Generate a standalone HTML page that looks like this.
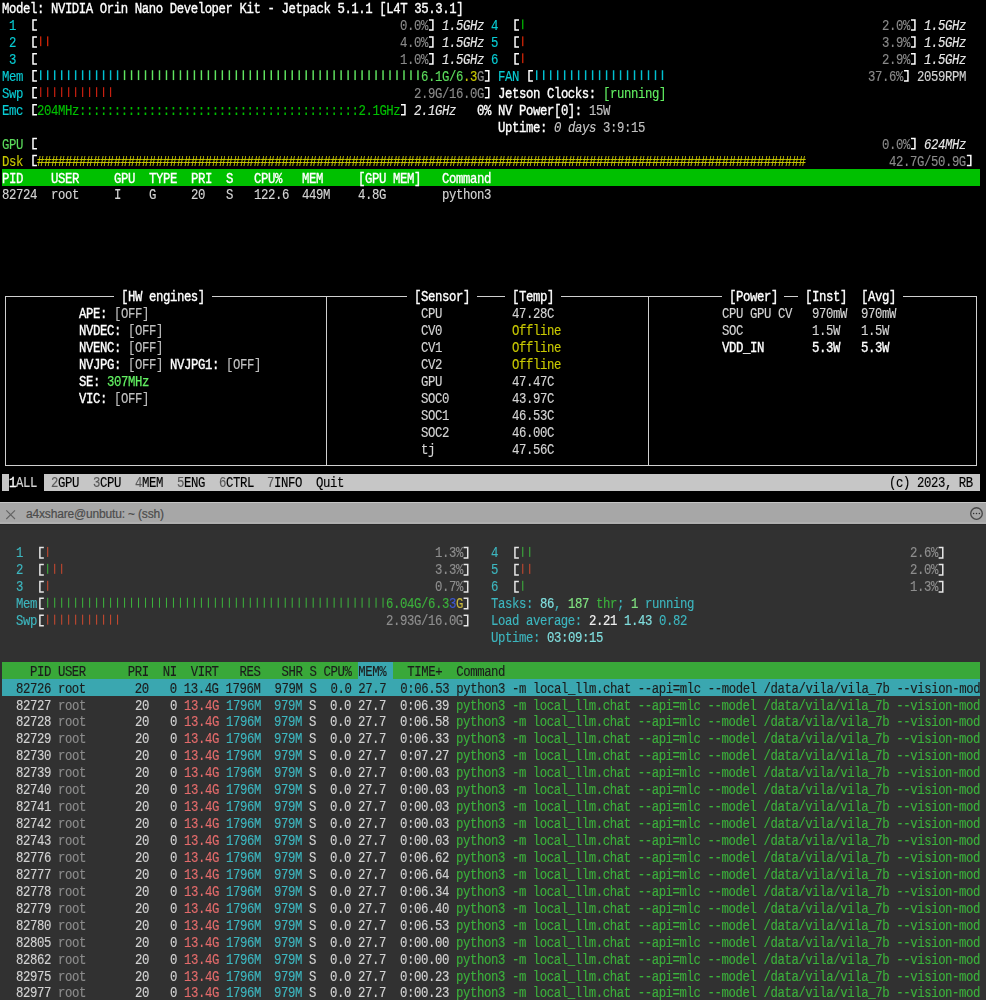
<!DOCTYPE html>
<html><head><meta charset="utf-8"><style>
html,body{margin:0;padding:0;background:#000;}
body{width:986px;height:1000px;position:relative;overflow:hidden;font-family:"Liberation Mono",monospace;}
.t{position:absolute;white-space:pre;font-size:14.5px;line-height:17.0px;letter-spacing:-0.481px;transform:scaleX(0.85);transform-origin:0 0;-webkit-text-stroke:0.15px currentColor;}
.r{position:absolute;}
#top{position:absolute;left:0;top:0;width:986px;height:502px;background:#000;}
#bot{position:absolute;left:0;top:524px;width:986px;height:476px;background:#313131;}
#bot .inner{position:absolute;left:0;top:-524px;width:986px;height:1000px;will-change:transform;}
.inner2{position:absolute;left:0;top:0;width:986px;height:502px;will-change:transform;}
#title{position:absolute;left:0;top:502px;width:986px;height:22px;background:#a7a7a7;border-top:1px solid #c6c6c6;border-bottom:2px solid #afafaf;box-sizing:border-box;}
#tline{position:absolute;left:0;top:524px;width:986px;height:1px;background:#292929;}
.w{color:#ffffff;-webkit-text-stroke:0.35px #ffffff;}
.br{color:#ffffff;-webkit-text-stroke:0.6px #ffffff;}
.hbr{color:#e8e8e8;-webkit-text-stroke:0.5px #e8e8e8;}
.lt{color:#d4d4d4;}
.gr{color:#8a8a8a;}
.gr2{color:#c0c0c0;}
.it2{color:#c8c8c8;font-style:italic;}
.cy{color:#08ccd4;}
.it{color:#e6e6e6;font-style:italic;}
.lg{color:#5cdc5c;}
.lgr{color:#62f062;}
.lgb{color:#62f062;-webkit-text-stroke:0.25px #62f062;}
.g{color:#00c000;}
.y{color:#c8c800;}
.bk{color:#000;}
.dg{color:#585858;}
.hcy{color:#3db6bf;}
.hw{color:#e8e8e8;-webkit-text-stroke:0.2px #e8e8e8;}
.hwb{color:#f0f0f0;-webkit-text-stroke:0.2px #f0f0f0;}
.hgr{color:#8e8e8e;}
.hlt{color:#d2d2d2;}
.hroot{color:#8c8c8c;}
.hred{color:#e36b6b;}
.hgreen{color:#3cb03c;}
.hlcy{color:#80dede;-webkit-text-stroke:0.2px #80dede;}
.hlg{color:#80e080;-webkit-text-stroke:0.2px #80e080;}
.hbl{color:#3c58d0;}
.hyl{color:#c8b83c;}
.hdark{color:#1c1c1c;}
#ttl{position:absolute;left:26px;top:3px;font-family:"Liberation Sans",sans-serif;font-size:12px;letter-spacing:-0.17px;line-height:16px;color:#4c4c4c;-webkit-text-stroke:0.2px #4c4c4c;white-space:pre;}
</style></head>
<body>
<div id="top"><div class="inner2">
<span class="t w" style="left:2.00px;top:1.14px">Model: NVIDIA Orin Nano Developer Kit - Jetpack 5.1.1 [L4T 35.3.1]</span>
<span class="t cy" style="left:8.99px;top:18.08px">1</span>
<span class="t gr" style="left:400.20px;top:18.08px">0.0%</span>
<span class="t it" style="left:442.12px;top:18.08px">1.5GHz</span>
<span class="t cy" style="left:491.02px;top:18.08px">4</span>
<span class="t gr" style="left:882.24px;top:18.08px">2.0%</span>
<span class="t it" style="left:924.15px;top:18.08px">1.5GHz</span>
<span class="t cy" style="left:8.99px;top:35.02px">2</span>
<span class="t gr" style="left:400.20px;top:35.02px">4.0%</span>
<span class="t it" style="left:442.12px;top:35.02px">1.5GHz</span>
<span class="t cy" style="left:491.02px;top:35.02px">5</span>
<span class="t gr" style="left:882.24px;top:35.02px">3.9%</span>
<span class="t it" style="left:924.15px;top:35.02px">1.5GHz</span>
<span class="t cy" style="left:8.99px;top:51.96px">3</span>
<span class="t gr" style="left:400.20px;top:51.96px">1.0%</span>
<span class="t it" style="left:442.12px;top:51.96px">1.5GHz</span>
<span class="t cy" style="left:491.02px;top:51.96px">6</span>
<span class="t gr" style="left:882.24px;top:51.96px">2.9%</span>
<span class="t it" style="left:924.15px;top:51.96px">1.5GHz</span>
<span class="t cy" style="left:2.00px;top:68.90px">Mem</span>
<span class="t lg" style="left:421.16px;top:68.90px">6.1G/6</span>
<span class="t y" style="left:463.08px;top:68.90px">.3</span>
<span class="t gr" style="left:477.05px;top:68.90px">G</span>
<span class="t cy" style="left:498.01px;top:68.90px">FAN</span>
<span class="t gr" style="left:868.26px;top:68.90px">37.6%</span>
<span class="t lt" style="left:917.17px;top:68.90px">2059RPM</span>
<span class="t cy" style="left:2.00px;top:85.84px">Swp</span>
<span class="t gr" style="left:414.17px;top:85.84px">2.9G/16.0G</span>
<span class="t w" style="left:498.01px;top:85.84px">Jetson Clocks:</span>
<span class="t lgr" style="left:602.80px;top:85.84px">[running]</span>
<span class="t cy" style="left:2.00px;top:102.78px">Emc</span>
<span class="t g" style="left:36.93px;top:102.78px">204MHz::::::::::::::::::::::::::::::::::::::::2.1GHz</span>
<span class="t it" style="left:414.17px;top:102.78px">2.1GHz</span>
<span class="t w" style="left:477.05px;top:102.78px">0%</span>
<span class="t w" style="left:498.01px;top:102.78px">NV Power[0]:</span>
<span class="t gr2" style="left:588.82px;top:102.78px">15W</span>
<span class="t w" style="left:498.01px;top:119.72px">Uptime:</span>
<span class="t it2" style="left:553.89px;top:119.72px">0 days</span>
<span class="t gr2" style="left:602.80px;top:119.72px">3:9:15</span>
<span class="t lg" style="left:2.00px;top:136.66px">GPU</span>
<span class="t gr" style="left:882.24px;top:136.66px">0.0%</span>
<span class="t it" style="left:924.15px;top:136.66px">624MHz</span>
<span class="t y" style="left:2.00px;top:153.60px">Dsk</span>
<span class="t y" style="left:36.93px;top:153.60px">##############################################################################################################</span>
<span class="t gr" style="left:889.22px;top:153.60px">42.7G/50.9G</span>
<div class="r" style="left:2.00px;top:169.00px;width:978.04px;height:16.94px;background:#00c000"></div>
<span class="t w" style="left:2.00px;top:170.54px">PID</span>
<span class="t w" style="left:50.90px;top:170.54px">USER</span>
<span class="t w" style="left:113.78px;top:170.54px">GPU</span>
<span class="t w" style="left:148.71px;top:170.54px">TYPE</span>
<span class="t w" style="left:190.62px;top:170.54px">PRI</span>
<span class="t w" style="left:225.55px;top:170.54px">S</span>
<span class="t w" style="left:253.50px;top:170.54px">CPU%</span>
<span class="t w" style="left:302.40px;top:170.54px">MEM</span>
<span class="t w" style="left:358.29px;top:170.54px">[GPU MEM]</span>
<span class="t w" style="left:442.12px;top:170.54px">Command</span>
<span class="t lt" style="left:2.00px;top:187.48px">82724</span>
<span class="t lt" style="left:50.90px;top:187.48px">root</span>
<span class="t lt" style="left:113.78px;top:187.48px">I</span>
<span class="t lt" style="left:148.71px;top:187.48px">G</span>
<span class="t lt" style="left:190.62px;top:187.48px">20</span>
<span class="t lt" style="left:225.55px;top:187.48px">S</span>
<span class="t lt" style="left:253.50px;top:187.48px">122.6</span>
<span class="t lt" style="left:302.40px;top:187.48px">449M</span>
<span class="t lt" style="left:358.29px;top:187.48px">4.8G</span>
<span class="t lt" style="left:442.12px;top:187.48px">python3</span>
<div class="r" style="left:5.49px;top:295.55px;width:108.28px;height:1.00px;background:#d0d0d0"></div>
<div class="r" style="left:211.58px;top:295.55px;width:195.61px;height:1.00px;background:#d0d0d0"></div>
<div class="r" style="left:477.05px;top:295.55px;width:27.94px;height:1.00px;background:#d0d0d0"></div>
<div class="r" style="left:560.88px;top:295.55px;width:160.68px;height:1.00px;background:#d0d0d0"></div>
<div class="r" style="left:784.43px;top:295.55px;width:13.97px;height:1.00px;background:#d0d0d0"></div>
<div class="r" style="left:903.19px;top:295.55px;width:73.85px;height:1.00px;background:#d0d0d0"></div>
<div class="r" style="left:5.49px;top:464.95px;width:971.55px;height:1.00px;background:#d0d0d0"></div>
<div class="r" style="left:4.99px;top:296.05px;width:1.00px;height:169.40px;background:#d0d0d0"></div>
<div class="r" style="left:326.35px;top:296.05px;width:1.00px;height:169.40px;background:#d0d0d0"></div>
<div class="r" style="left:647.71px;top:296.05px;width:1.00px;height:169.40px;background:#d0d0d0"></div>
<div class="r" style="left:976.05px;top:296.05px;width:1.00px;height:169.40px;background:#d0d0d0"></div>
<span class="t w" style="left:120.76px;top:289.12px">[HW engines]</span>
<span class="t w" style="left:414.17px;top:289.12px">[Sensor]</span>
<span class="t w" style="left:511.98px;top:289.12px">[Temp]</span>
<span class="t w" style="left:728.54px;top:289.12px">[Power]</span>
<span class="t w" style="left:805.39px;top:289.12px">[Inst]</span>
<span class="t w" style="left:861.28px;top:289.12px">[Avg]</span>
<span class="t w" style="left:78.85px;top:306.06px">APE:</span>
<span class="t gr2" style="left:113.78px;top:306.06px">[OFF]</span>
<span class="t w" style="left:78.85px;top:323.00px">NVDEC:</span>
<span class="t gr2" style="left:127.75px;top:323.00px">[OFF]</span>
<span class="t w" style="left:78.85px;top:339.94px">NVENC:</span>
<span class="t gr2" style="left:127.75px;top:339.94px">[OFF]</span>
<span class="t w" style="left:78.85px;top:356.88px">NVJPG:</span>
<span class="t gr2" style="left:127.75px;top:356.88px">[OFF]</span>
<span class="t w" style="left:169.66px;top:356.88px">NVJPG1:</span>
<span class="t gr2" style="left:225.55px;top:356.88px">[OFF]</span>
<span class="t w" style="left:78.85px;top:373.82px">SE:</span>
<span class="t lgb" style="left:106.79px;top:373.82px">307MHz</span>
<span class="t w" style="left:78.85px;top:390.76px">VIC:</span>
<span class="t gr2" style="left:113.78px;top:390.76px">[OFF]</span>
<span class="t lt" style="left:421.16px;top:306.06px">CPU</span>
<span class="t lt" style="left:511.98px;top:306.06px">47.28C</span>
<span class="t lt" style="left:421.16px;top:323.00px">CV0</span>
<span class="t y" style="left:511.98px;top:323.00px">Offline</span>
<span class="t lt" style="left:421.16px;top:339.94px">CV1</span>
<span class="t y" style="left:511.98px;top:339.94px">Offline</span>
<span class="t lt" style="left:421.16px;top:356.88px">CV2</span>
<span class="t y" style="left:511.98px;top:356.88px">Offline</span>
<span class="t lt" style="left:421.16px;top:373.82px">GPU</span>
<span class="t lt" style="left:511.98px;top:373.82px">47.47C</span>
<span class="t lt" style="left:421.16px;top:390.76px">SOC0</span>
<span class="t lt" style="left:511.98px;top:390.76px">43.97C</span>
<span class="t lt" style="left:421.16px;top:407.70px">SOC1</span>
<span class="t lt" style="left:511.98px;top:407.70px">46.53C</span>
<span class="t lt" style="left:421.16px;top:424.64px">SOC2</span>
<span class="t lt" style="left:511.98px;top:424.64px">46.00C</span>
<span class="t lt" style="left:421.16px;top:441.58px">tj</span>
<span class="t lt" style="left:511.98px;top:441.58px">47.56C</span>
<span class="t lt" style="left:721.56px;top:306.06px">CPU GPU CV</span>
<span class="t lt" style="left:812.38px;top:306.06px">970mW</span>
<span class="t lt" style="left:861.28px;top:306.06px">970mW</span>
<span class="t lt" style="left:721.56px;top:323.00px">SOC</span>
<span class="t lt" style="left:812.38px;top:323.00px">1.5W</span>
<span class="t lt" style="left:861.28px;top:323.00px">1.5W</span>
<span class="t w" style="left:721.56px;top:339.94px">VDD_IN</span>
<span class="t w" style="left:812.38px;top:339.94px">5.3W</span>
<span class="t w" style="left:861.28px;top:339.94px">5.3W</span>
<div class="r" style="left:2.00px;top:473.92px;width:6.99px;height:16.94px;background:#c6c6c6"></div>
<div class="r" style="left:43.92px;top:473.92px;width:936.12px;height:16.94px;background:#c6c6c6"></div>
<span class="t w" style="left:8.99px;top:475.46px">1</span>
<span class="t lt" style="left:15.97px;top:475.46px">ALL</span>
<span class="t dg" style="left:50.90px;top:475.46px">2</span>
<span class="t bk" style="left:57.89px;top:475.46px">GPU</span>
<span class="t dg" style="left:92.82px;top:475.46px">3</span>
<span class="t bk" style="left:99.80px;top:475.46px">CPU</span>
<span class="t dg" style="left:134.73px;top:475.46px">4</span>
<span class="t bk" style="left:141.72px;top:475.46px">MEM</span>
<span class="t dg" style="left:176.65px;top:475.46px">5</span>
<span class="t bk" style="left:183.64px;top:475.46px">ENG</span>
<span class="t dg" style="left:218.57px;top:475.46px">6</span>
<span class="t bk" style="left:225.55px;top:475.46px">CTRL</span>
<span class="t dg" style="left:267.47px;top:475.46px">7</span>
<span class="t bk" style="left:274.45px;top:475.46px">INFO</span>
<span class="t bk" style="left:316.37px;top:475.46px">Quit</span>
<span class="t bk" style="left:889.22px;top:475.46px">(c) 2023, RB</span>
</div></div>
<div id="title">
<svg style="position:absolute;left:5px;top:6px" width="12" height="12" viewBox="0 0 12 12"><path d="M1.3 1.3L10 10M10 1.3L1.3 10" stroke="#636363" stroke-width="1.1" fill="none"/></svg>
<span id="ttl">a4xshare@unbutu: ~ (ssh)</span>
<svg style="position:absolute;left:969px;top:3px" width="15" height="15" viewBox="0 0 15 15"><circle cx="7.5" cy="7.5" r="5.8" stroke="#484848" stroke-width="1.35" fill="none"/><circle cx="4.6" cy="7.5" r="0.75" fill="#303030"/><circle cx="7.5" cy="7.5" r="0.75" fill="#303030"/><circle cx="10.4" cy="7.5" r="0.75" fill="#303030"/></svg>
</div>
<div id="bot"><div class="inner">
<span class="t hcy" style="left:15.97px;top:545.04px">1</span>
<span class="t hcy" style="left:15.97px;top:561.98px">2</span>
<span class="t hcy" style="left:15.97px;top:578.92px">3</span>
<span class="t hgr" style="left:435.13px;top:545.04px">1.3%</span>
<span class="t hgr" style="left:435.13px;top:561.98px">3.3%</span>
<span class="t hgr" style="left:435.13px;top:578.92px">0.7%</span>
<span class="t hcy" style="left:491.02px;top:545.04px">4</span>
<span class="t hgr" style="left:910.18px;top:545.04px">2.6%</span>
<span class="t hcy" style="left:491.02px;top:561.98px">5</span>
<span class="t hgr" style="left:910.18px;top:561.98px">2.0%</span>
<span class="t hcy" style="left:491.02px;top:578.92px">6</span>
<span class="t hgr" style="left:910.18px;top:578.92px">1.3%</span>
<span class="t hcy" style="left:15.97px;top:595.86px">Mem</span>
<span class="t hgreen" style="left:386.23px;top:595.86px">6.04G/6.3</span>
<span class="t hbl" style="left:449.10px;top:595.86px">3</span>
<span class="t hyl" style="left:456.09px;top:595.86px">G</span>
<span class="t hcy" style="left:15.97px;top:612.80px">Swp</span>
<span class="t hgr" style="left:386.23px;top:612.80px">2.93G/16.0G</span>
<span class="t hcy" style="left:491.02px;top:595.86px">Tasks:</span>
<span class="t hlcy" style="left:539.92px;top:595.86px">86</span>
<span class="t hcy" style="left:553.89px;top:595.86px">,</span>
<span class="t hlg" style="left:567.87px;top:595.86px">187</span>
<span class="t hgreen" style="left:595.81px;top:595.86px">thr</span>
<span class="t hcy" style="left:616.77px;top:595.86px">;</span>
<span class="t hlg" style="left:630.74px;top:595.86px">1</span>
<span class="t hcy" style="left:644.71px;top:595.86px">running</span>
<span class="t hcy" style="left:491.02px;top:612.80px">Load average:</span>
<span class="t hwb" style="left:588.82px;top:612.80px">2.21</span>
<span class="t hlcy" style="left:623.75px;top:612.80px">1.43</span>
<span class="t hcy" style="left:658.68px;top:612.80px">0.82</span>
<span class="t hcy" style="left:491.02px;top:629.74px">Uptime:</span>
<span class="t hlcy" style="left:546.91px;top:629.74px">03:09:15</span>
<div class="r" style="left:2.00px;top:662.08px;width:978.04px;height:16.94px;background:#39a839"></div>
<div class="r" style="left:358.29px;top:662.08px;width:34.93px;height:16.94px;background:#3aa7b0"></div>
<span class="t hdark" style="left:2.00px;top:663.62px">    PID USER      PRI  NI  VIRT   RES   SHR S CPU% MEM%   TIME+  Command</span>
<div class="r" style="left:2.00px;top:679.02px;width:978.04px;height:16.94px;background:#3aa7b0"></div>
<span class="t hdark" style="left:2.00px;top:680.56px">  82726 root       20   0 13.4G 1796M  979M S  0.0 27.7  0:06.53 python3 -m local_llm.chat --api=mlc --model /data/vila/vila_7b --vision-mod</span>
<span class="t hlt" style="left:15.97px;top:697.50px">82727</span>
<span class="t hroot" style="left:57.89px;top:697.50px">root</span>
<span class="t hlt" style="left:134.73px;top:697.50px">20</span>
<span class="t hlt" style="left:169.66px;top:697.50px">0</span>
<span class="t hred" style="left:183.64px;top:697.50px">13.4G</span>
<span class="t hcy" style="left:225.55px;top:697.50px">1796M</span>
<span class="t hcy" style="left:274.45px;top:697.50px">979M</span>
<span class="t hlt" style="left:309.38px;top:697.50px">S</span>
<span class="t hlt" style="left:330.34px;top:697.50px">0.0 27.7</span>
<span class="t hlt" style="left:400.20px;top:697.50px">0:06.39</span>
<span class="t hgreen" style="left:456.09px;top:697.50px">python3 -m local_llm.chat --api=mlc --model /data/vila/vila_7b --vision-mod</span>
<span class="t hlt" style="left:15.97px;top:714.44px">82728</span>
<span class="t hroot" style="left:57.89px;top:714.44px">root</span>
<span class="t hlt" style="left:134.73px;top:714.44px">20</span>
<span class="t hlt" style="left:169.66px;top:714.44px">0</span>
<span class="t hred" style="left:183.64px;top:714.44px">13.4G</span>
<span class="t hcy" style="left:225.55px;top:714.44px">1796M</span>
<span class="t hcy" style="left:274.45px;top:714.44px">979M</span>
<span class="t hlt" style="left:309.38px;top:714.44px">S</span>
<span class="t hlt" style="left:330.34px;top:714.44px">0.0 27.7</span>
<span class="t hlt" style="left:400.20px;top:714.44px">0:06.58</span>
<span class="t hgreen" style="left:456.09px;top:714.44px">python3 -m local_llm.chat --api=mlc --model /data/vila/vila_7b --vision-mod</span>
<span class="t hlt" style="left:15.97px;top:731.38px">82729</span>
<span class="t hroot" style="left:57.89px;top:731.38px">root</span>
<span class="t hlt" style="left:134.73px;top:731.38px">20</span>
<span class="t hlt" style="left:169.66px;top:731.38px">0</span>
<span class="t hred" style="left:183.64px;top:731.38px">13.4G</span>
<span class="t hcy" style="left:225.55px;top:731.38px">1796M</span>
<span class="t hcy" style="left:274.45px;top:731.38px">979M</span>
<span class="t hlt" style="left:309.38px;top:731.38px">S</span>
<span class="t hlt" style="left:330.34px;top:731.38px">0.0 27.7</span>
<span class="t hlt" style="left:400.20px;top:731.38px">0:06.33</span>
<span class="t hgreen" style="left:456.09px;top:731.38px">python3 -m local_llm.chat --api=mlc --model /data/vila/vila_7b --vision-mod</span>
<span class="t hlt" style="left:15.97px;top:748.32px">82730</span>
<span class="t hroot" style="left:57.89px;top:748.32px">root</span>
<span class="t hlt" style="left:134.73px;top:748.32px">20</span>
<span class="t hlt" style="left:169.66px;top:748.32px">0</span>
<span class="t hred" style="left:183.64px;top:748.32px">13.4G</span>
<span class="t hcy" style="left:225.55px;top:748.32px">1796M</span>
<span class="t hcy" style="left:274.45px;top:748.32px">979M</span>
<span class="t hlt" style="left:309.38px;top:748.32px">S</span>
<span class="t hlt" style="left:330.34px;top:748.32px">0.0 27.7</span>
<span class="t hlt" style="left:400.20px;top:748.32px">0:07.27</span>
<span class="t hgreen" style="left:456.09px;top:748.32px">python3 -m local_llm.chat --api=mlc --model /data/vila/vila_7b --vision-mod</span>
<span class="t hlt" style="left:15.97px;top:765.26px">82739</span>
<span class="t hroot" style="left:57.89px;top:765.26px">root</span>
<span class="t hlt" style="left:134.73px;top:765.26px">20</span>
<span class="t hlt" style="left:169.66px;top:765.26px">0</span>
<span class="t hred" style="left:183.64px;top:765.26px">13.4G</span>
<span class="t hcy" style="left:225.55px;top:765.26px">1796M</span>
<span class="t hcy" style="left:274.45px;top:765.26px">979M</span>
<span class="t hlt" style="left:309.38px;top:765.26px">S</span>
<span class="t hlt" style="left:330.34px;top:765.26px">0.0 27.7</span>
<span class="t hlt" style="left:400.20px;top:765.26px">0:00.03</span>
<span class="t hgreen" style="left:456.09px;top:765.26px">python3 -m local_llm.chat --api=mlc --model /data/vila/vila_7b --vision-mod</span>
<span class="t hlt" style="left:15.97px;top:782.20px">82740</span>
<span class="t hroot" style="left:57.89px;top:782.20px">root</span>
<span class="t hlt" style="left:134.73px;top:782.20px">20</span>
<span class="t hlt" style="left:169.66px;top:782.20px">0</span>
<span class="t hred" style="left:183.64px;top:782.20px">13.4G</span>
<span class="t hcy" style="left:225.55px;top:782.20px">1796M</span>
<span class="t hcy" style="left:274.45px;top:782.20px">979M</span>
<span class="t hlt" style="left:309.38px;top:782.20px">S</span>
<span class="t hlt" style="left:330.34px;top:782.20px">0.0 27.7</span>
<span class="t hlt" style="left:400.20px;top:782.20px">0:00.03</span>
<span class="t hgreen" style="left:456.09px;top:782.20px">python3 -m local_llm.chat --api=mlc --model /data/vila/vila_7b --vision-mod</span>
<span class="t hlt" style="left:15.97px;top:799.14px">82741</span>
<span class="t hroot" style="left:57.89px;top:799.14px">root</span>
<span class="t hlt" style="left:134.73px;top:799.14px">20</span>
<span class="t hlt" style="left:169.66px;top:799.14px">0</span>
<span class="t hred" style="left:183.64px;top:799.14px">13.4G</span>
<span class="t hcy" style="left:225.55px;top:799.14px">1796M</span>
<span class="t hcy" style="left:274.45px;top:799.14px">979M</span>
<span class="t hlt" style="left:309.38px;top:799.14px">S</span>
<span class="t hlt" style="left:330.34px;top:799.14px">0.0 27.7</span>
<span class="t hlt" style="left:400.20px;top:799.14px">0:00.03</span>
<span class="t hgreen" style="left:456.09px;top:799.14px">python3 -m local_llm.chat --api=mlc --model /data/vila/vila_7b --vision-mod</span>
<span class="t hlt" style="left:15.97px;top:816.08px">82742</span>
<span class="t hroot" style="left:57.89px;top:816.08px">root</span>
<span class="t hlt" style="left:134.73px;top:816.08px">20</span>
<span class="t hlt" style="left:169.66px;top:816.08px">0</span>
<span class="t hred" style="left:183.64px;top:816.08px">13.4G</span>
<span class="t hcy" style="left:225.55px;top:816.08px">1796M</span>
<span class="t hcy" style="left:274.45px;top:816.08px">979M</span>
<span class="t hlt" style="left:309.38px;top:816.08px">S</span>
<span class="t hlt" style="left:330.34px;top:816.08px">0.0 27.7</span>
<span class="t hlt" style="left:400.20px;top:816.08px">0:00.03</span>
<span class="t hgreen" style="left:456.09px;top:816.08px">python3 -m local_llm.chat --api=mlc --model /data/vila/vila_7b --vision-mod</span>
<span class="t hlt" style="left:15.97px;top:833.02px">82743</span>
<span class="t hroot" style="left:57.89px;top:833.02px">root</span>
<span class="t hlt" style="left:134.73px;top:833.02px">20</span>
<span class="t hlt" style="left:169.66px;top:833.02px">0</span>
<span class="t hred" style="left:183.64px;top:833.02px">13.4G</span>
<span class="t hcy" style="left:225.55px;top:833.02px">1796M</span>
<span class="t hcy" style="left:274.45px;top:833.02px">979M</span>
<span class="t hlt" style="left:309.38px;top:833.02px">S</span>
<span class="t hlt" style="left:330.34px;top:833.02px">0.0 27.7</span>
<span class="t hlt" style="left:400.20px;top:833.02px">0:00.03</span>
<span class="t hgreen" style="left:456.09px;top:833.02px">python3 -m local_llm.chat --api=mlc --model /data/vila/vila_7b --vision-mod</span>
<span class="t hlt" style="left:15.97px;top:849.96px">82776</span>
<span class="t hroot" style="left:57.89px;top:849.96px">root</span>
<span class="t hlt" style="left:134.73px;top:849.96px">20</span>
<span class="t hlt" style="left:169.66px;top:849.96px">0</span>
<span class="t hred" style="left:183.64px;top:849.96px">13.4G</span>
<span class="t hcy" style="left:225.55px;top:849.96px">1796M</span>
<span class="t hcy" style="left:274.45px;top:849.96px">979M</span>
<span class="t hlt" style="left:309.38px;top:849.96px">S</span>
<span class="t hlt" style="left:330.34px;top:849.96px">0.0 27.7</span>
<span class="t hlt" style="left:400.20px;top:849.96px">0:06.62</span>
<span class="t hgreen" style="left:456.09px;top:849.96px">python3 -m local_llm.chat --api=mlc --model /data/vila/vila_7b --vision-mod</span>
<span class="t hlt" style="left:15.97px;top:866.90px">82777</span>
<span class="t hroot" style="left:57.89px;top:866.90px">root</span>
<span class="t hlt" style="left:134.73px;top:866.90px">20</span>
<span class="t hlt" style="left:169.66px;top:866.90px">0</span>
<span class="t hred" style="left:183.64px;top:866.90px">13.4G</span>
<span class="t hcy" style="left:225.55px;top:866.90px">1796M</span>
<span class="t hcy" style="left:274.45px;top:866.90px">979M</span>
<span class="t hlt" style="left:309.38px;top:866.90px">S</span>
<span class="t hlt" style="left:330.34px;top:866.90px">0.0 27.7</span>
<span class="t hlt" style="left:400.20px;top:866.90px">0:06.64</span>
<span class="t hgreen" style="left:456.09px;top:866.90px">python3 -m local_llm.chat --api=mlc --model /data/vila/vila_7b --vision-mod</span>
<span class="t hlt" style="left:15.97px;top:883.84px">82778</span>
<span class="t hroot" style="left:57.89px;top:883.84px">root</span>
<span class="t hlt" style="left:134.73px;top:883.84px">20</span>
<span class="t hlt" style="left:169.66px;top:883.84px">0</span>
<span class="t hred" style="left:183.64px;top:883.84px">13.4G</span>
<span class="t hcy" style="left:225.55px;top:883.84px">1796M</span>
<span class="t hcy" style="left:274.45px;top:883.84px">979M</span>
<span class="t hlt" style="left:309.38px;top:883.84px">S</span>
<span class="t hlt" style="left:330.34px;top:883.84px">0.0 27.7</span>
<span class="t hlt" style="left:400.20px;top:883.84px">0:06.34</span>
<span class="t hgreen" style="left:456.09px;top:883.84px">python3 -m local_llm.chat --api=mlc --model /data/vila/vila_7b --vision-mod</span>
<span class="t hlt" style="left:15.97px;top:900.78px">82779</span>
<span class="t hroot" style="left:57.89px;top:900.78px">root</span>
<span class="t hlt" style="left:134.73px;top:900.78px">20</span>
<span class="t hlt" style="left:169.66px;top:900.78px">0</span>
<span class="t hred" style="left:183.64px;top:900.78px">13.4G</span>
<span class="t hcy" style="left:225.55px;top:900.78px">1796M</span>
<span class="t hcy" style="left:274.45px;top:900.78px">979M</span>
<span class="t hlt" style="left:309.38px;top:900.78px">S</span>
<span class="t hlt" style="left:330.34px;top:900.78px">0.0 27.7</span>
<span class="t hlt" style="left:400.20px;top:900.78px">0:06.40</span>
<span class="t hgreen" style="left:456.09px;top:900.78px">python3 -m local_llm.chat --api=mlc --model /data/vila/vila_7b --vision-mod</span>
<span class="t hlt" style="left:15.97px;top:917.72px">82780</span>
<span class="t hroot" style="left:57.89px;top:917.72px">root</span>
<span class="t hlt" style="left:134.73px;top:917.72px">20</span>
<span class="t hlt" style="left:169.66px;top:917.72px">0</span>
<span class="t hred" style="left:183.64px;top:917.72px">13.4G</span>
<span class="t hcy" style="left:225.55px;top:917.72px">1796M</span>
<span class="t hcy" style="left:274.45px;top:917.72px">979M</span>
<span class="t hlt" style="left:309.38px;top:917.72px">S</span>
<span class="t hlt" style="left:330.34px;top:917.72px">0.0 27.7</span>
<span class="t hlt" style="left:400.20px;top:917.72px">0:06.53</span>
<span class="t hgreen" style="left:456.09px;top:917.72px">python3 -m local_llm.chat --api=mlc --model /data/vila/vila_7b --vision-mod</span>
<span class="t hlt" style="left:15.97px;top:934.66px">82805</span>
<span class="t hroot" style="left:57.89px;top:934.66px">root</span>
<span class="t hlt" style="left:134.73px;top:934.66px">20</span>
<span class="t hlt" style="left:169.66px;top:934.66px">0</span>
<span class="t hred" style="left:183.64px;top:934.66px">13.4G</span>
<span class="t hcy" style="left:225.55px;top:934.66px">1796M</span>
<span class="t hcy" style="left:274.45px;top:934.66px">979M</span>
<span class="t hlt" style="left:309.38px;top:934.66px">S</span>
<span class="t hlt" style="left:330.34px;top:934.66px">0.0 27.7</span>
<span class="t hlt" style="left:400.20px;top:934.66px">0:00.00</span>
<span class="t hgreen" style="left:456.09px;top:934.66px">python3 -m local_llm.chat --api=mlc --model /data/vila/vila_7b --vision-mod</span>
<span class="t hlt" style="left:15.97px;top:951.60px">82862</span>
<span class="t hroot" style="left:57.89px;top:951.60px">root</span>
<span class="t hlt" style="left:134.73px;top:951.60px">20</span>
<span class="t hlt" style="left:169.66px;top:951.60px">0</span>
<span class="t hred" style="left:183.64px;top:951.60px">13.4G</span>
<span class="t hcy" style="left:225.55px;top:951.60px">1796M</span>
<span class="t hcy" style="left:274.45px;top:951.60px">979M</span>
<span class="t hlt" style="left:309.38px;top:951.60px">S</span>
<span class="t hlt" style="left:330.34px;top:951.60px">0.0 27.7</span>
<span class="t hlt" style="left:400.20px;top:951.60px">0:00.00</span>
<span class="t hgreen" style="left:456.09px;top:951.60px">python3 -m local_llm.chat --api=mlc --model /data/vila/vila_7b --vision-mod</span>
<span class="t hlt" style="left:15.97px;top:968.54px">82975</span>
<span class="t hroot" style="left:57.89px;top:968.54px">root</span>
<span class="t hlt" style="left:134.73px;top:968.54px">20</span>
<span class="t hlt" style="left:169.66px;top:968.54px">0</span>
<span class="t hred" style="left:183.64px;top:968.54px">13.4G</span>
<span class="t hcy" style="left:225.55px;top:968.54px">1796M</span>
<span class="t hcy" style="left:274.45px;top:968.54px">979M</span>
<span class="t hlt" style="left:309.38px;top:968.54px">S</span>
<span class="t hlt" style="left:330.34px;top:968.54px">0.0 27.7</span>
<span class="t hlt" style="left:400.20px;top:968.54px">0:00.23</span>
<span class="t hgreen" style="left:456.09px;top:968.54px">python3 -m local_llm.chat --api=mlc --model /data/vila/vila_7b --vision-mod</span>
<span class="t hlt" style="left:15.97px;top:985.48px">82977</span>
<span class="t hroot" style="left:57.89px;top:985.48px">root</span>
<span class="t hlt" style="left:134.73px;top:985.48px">20</span>
<span class="t hlt" style="left:169.66px;top:985.48px">0</span>
<span class="t hred" style="left:183.64px;top:985.48px">13.4G</span>
<span class="t hcy" style="left:225.55px;top:985.48px">1796M</span>
<span class="t hcy" style="left:274.45px;top:985.48px">979M</span>
<span class="t hlt" style="left:309.38px;top:985.48px">S</span>
<span class="t hlt" style="left:330.34px;top:985.48px">0.0 27.7</span>
<span class="t hlt" style="left:400.20px;top:985.48px">0:00.23</span>
<span class="t hgreen" style="left:456.09px;top:985.48px">python3 -m local_llm.chat --api=mlc --model /data/vila/vila_7b --vision-mod</span>
</div></div>
<div id="tline"></div>
<svg style="position:absolute;left:0;top:0" width="986" height="1000"><path d="M32.24 19.24H36.94V20.74H33.74V29.34H36.94V30.84H32.24Z" fill="#ffffff"/><path d="M428.95 19.24H433.65V30.84H428.95V29.34H432.15V20.74H428.95Z" fill="#ffffff"/><path d="M514.28 19.24H518.98V20.74H515.78V29.34H518.98V30.84H514.28Z" fill="#ffffff"/><path d="M910.98 19.24H915.68V30.84H910.98V29.34H914.18V20.74H910.98Z" fill="#ffffff"/><path d="M32.24 36.18H36.94V37.68H33.74V46.28H36.94V47.78H32.24Z" fill="#ffffff"/><path d="M428.95 36.18H433.65V47.78H428.95V46.28H432.15V37.68H428.95Z" fill="#ffffff"/><path d="M514.28 36.18H518.98V37.68H515.78V46.28H518.98V47.78H514.28Z" fill="#ffffff"/><path d="M910.98 36.18H915.68V47.78H910.98V46.28H914.18V37.68H910.98Z" fill="#ffffff"/><path d="M32.24 53.12H36.94V54.62H33.74V63.22H36.94V64.72H32.24Z" fill="#ffffff"/><path d="M428.95 53.12H433.65V64.72H428.95V63.22H432.15V54.62H428.95Z" fill="#ffffff"/><path d="M514.28 53.12H518.98V54.62H515.78V63.22H518.98V64.72H514.28Z" fill="#ffffff"/><path d="M910.98 53.12H915.68V64.72H910.98V63.22H914.18V54.62H910.98Z" fill="#ffffff"/><rect x="40.12" y="36.38" width="1.2" height="9.8" fill="#e02808"/><rect x="47.11" y="36.38" width="1.2" height="9.8" fill="#e02808"/><rect x="522.16" y="19.44" width="1.2" height="9.8" fill="#00c000"/><rect x="522.16" y="36.38" width="1.2" height="9.8" fill="#e02808"/><rect x="522.16" y="53.32" width="1.2" height="9.8" fill="#e02808"/><path d="M32.24 70.06H36.94V71.56H33.74V80.16H36.94V81.66H32.24Z" fill="#ffffff"/><rect x="40.00" y="70.26" width="1.45" height="9.8" fill="#00c0d0"/><rect x="46.98" y="70.26" width="1.45" height="9.8" fill="#00c0d0"/><rect x="53.97" y="70.26" width="1.45" height="9.8" fill="#00c0d0"/><rect x="60.96" y="70.26" width="1.45" height="9.8" fill="#00c0d0"/><rect x="67.94" y="70.26" width="1.45" height="9.8" fill="#00c0d0"/><rect x="74.93" y="70.26" width="1.45" height="9.8" fill="#00c0d0"/><rect x="81.91" y="70.26" width="1.45" height="9.8" fill="#00c0d0"/><rect x="88.90" y="70.26" width="1.45" height="9.8" fill="#00c0d0"/><rect x="95.89" y="70.26" width="1.45" height="9.8" fill="#00c0d0"/><rect x="102.87" y="70.26" width="1.45" height="9.8" fill="#00c0d0"/><rect x="109.86" y="70.26" width="1.45" height="9.8" fill="#00c0d0"/><rect x="116.84" y="70.26" width="1.45" height="9.8" fill="#00c0d0"/><rect x="123.83" y="70.26" width="1.45" height="9.8" fill="#60e460"/><rect x="130.82" y="70.26" width="1.45" height="9.8" fill="#60e460"/><rect x="137.80" y="70.26" width="1.45" height="9.8" fill="#60e460"/><rect x="144.79" y="70.26" width="1.45" height="9.8" fill="#60e460"/><rect x="151.77" y="70.26" width="1.45" height="9.8" fill="#60e460"/><rect x="158.76" y="70.26" width="1.45" height="9.8" fill="#60e460"/><rect x="165.75" y="70.26" width="1.45" height="9.8" fill="#60e460"/><rect x="172.73" y="70.26" width="1.45" height="9.8" fill="#60e460"/><rect x="179.72" y="70.26" width="1.45" height="9.8" fill="#60e460"/><rect x="186.70" y="70.26" width="1.45" height="9.8" fill="#60e460"/><rect x="193.69" y="70.26" width="1.45" height="9.8" fill="#60e460"/><rect x="200.68" y="70.26" width="1.45" height="9.8" fill="#60e460"/><rect x="207.66" y="70.26" width="1.45" height="9.8" fill="#60e460"/><rect x="214.65" y="70.26" width="1.45" height="9.8" fill="#60e460"/><rect x="221.63" y="70.26" width="1.45" height="9.8" fill="#60e460"/><rect x="228.62" y="70.26" width="1.45" height="9.8" fill="#60e460"/><rect x="235.61" y="70.26" width="1.45" height="9.8" fill="#60e460"/><rect x="242.59" y="70.26" width="1.45" height="9.8" fill="#60e460"/><rect x="249.58" y="70.26" width="1.45" height="9.8" fill="#60e460"/><rect x="256.56" y="70.26" width="1.45" height="9.8" fill="#60e460"/><rect x="263.55" y="70.26" width="1.45" height="9.8" fill="#60e460"/><rect x="270.54" y="70.26" width="1.45" height="9.8" fill="#60e460"/><rect x="277.52" y="70.26" width="1.45" height="9.8" fill="#60e460"/><rect x="284.51" y="70.26" width="1.45" height="9.8" fill="#60e460"/><rect x="291.49" y="70.26" width="1.45" height="9.8" fill="#60e460"/><rect x="298.48" y="70.26" width="1.45" height="9.8" fill="#60e460"/><rect x="305.47" y="70.26" width="1.45" height="9.8" fill="#60e460"/><rect x="312.45" y="70.26" width="1.45" height="9.8" fill="#60e460"/><rect x="319.44" y="70.26" width="1.45" height="9.8" fill="#60e460"/><rect x="326.42" y="70.26" width="1.45" height="9.8" fill="#60e460"/><rect x="333.41" y="70.26" width="1.45" height="9.8" fill="#60e460"/><rect x="340.40" y="70.26" width="1.45" height="9.8" fill="#60e460"/><rect x="347.38" y="70.26" width="1.45" height="9.8" fill="#60e460"/><rect x="354.37" y="70.26" width="1.45" height="9.8" fill="#60e460"/><rect x="361.35" y="70.26" width="1.45" height="9.8" fill="#60e460"/><rect x="368.34" y="70.26" width="1.45" height="9.8" fill="#60e460"/><rect x="375.33" y="70.26" width="1.45" height="9.8" fill="#60e460"/><rect x="382.31" y="70.26" width="1.45" height="9.8" fill="#60e460"/><rect x="389.30" y="70.26" width="1.45" height="9.8" fill="#60e460"/><rect x="396.28" y="70.26" width="1.45" height="9.8" fill="#60e460"/><rect x="403.27" y="70.26" width="1.45" height="9.8" fill="#60e460"/><rect x="410.26" y="70.26" width="1.45" height="9.8" fill="#60e460"/><rect x="417.24" y="70.26" width="1.45" height="9.8" fill="#60e460"/><path d="M484.83 70.06H489.53V81.66H484.83V80.16H488.03V71.56H484.83Z" fill="#ffffff"/><path d="M528.25 70.06H532.95V71.56H529.75V80.16H532.95V81.66H528.25Z" fill="#ffffff"/><rect x="536.00" y="70.26" width="1.45" height="9.8" fill="#00c0d0"/><rect x="542.99" y="70.26" width="1.45" height="9.8" fill="#00c0d0"/><rect x="549.98" y="70.26" width="1.45" height="9.8" fill="#00c0d0"/><rect x="556.96" y="70.26" width="1.45" height="9.8" fill="#00c0d0"/><rect x="563.95" y="70.26" width="1.45" height="9.8" fill="#00c0d0"/><rect x="570.93" y="70.26" width="1.45" height="9.8" fill="#00c0d0"/><rect x="577.92" y="70.26" width="1.45" height="9.8" fill="#00c0d0"/><rect x="584.91" y="70.26" width="1.45" height="9.8" fill="#00c0d0"/><rect x="591.89" y="70.26" width="1.45" height="9.8" fill="#00c0d0"/><rect x="598.88" y="70.26" width="1.45" height="9.8" fill="#00c0d0"/><rect x="605.86" y="70.26" width="1.45" height="9.8" fill="#00c0d0"/><rect x="612.85" y="70.26" width="1.45" height="9.8" fill="#00c0d0"/><rect x="619.84" y="70.26" width="1.45" height="9.8" fill="#00c0d0"/><rect x="626.82" y="70.26" width="1.45" height="9.8" fill="#00c0d0"/><rect x="633.81" y="70.26" width="1.45" height="9.8" fill="#00c0d0"/><rect x="640.79" y="70.26" width="1.45" height="9.8" fill="#00c0d0"/><rect x="647.78" y="70.26" width="1.45" height="9.8" fill="#00c0d0"/><rect x="654.77" y="70.26" width="1.45" height="9.8" fill="#00c0d0"/><rect x="661.75" y="70.26" width="1.45" height="9.8" fill="#00c0d0"/><path d="M903.99 70.06H908.69V81.66H903.99V80.16H907.19V71.56H903.99Z" fill="#ffffff"/><path d="M32.24 87.00H36.94V88.50H33.74V97.10H36.94V98.60H32.24Z" fill="#ffffff"/><rect x="40.12" y="87.20" width="1.2" height="9.8" fill="#c82010"/><rect x="47.11" y="87.20" width="1.2" height="9.8" fill="#c82010"/><rect x="54.09" y="87.20" width="1.2" height="9.8" fill="#c82010"/><rect x="61.08" y="87.20" width="1.2" height="9.8" fill="#c82010"/><rect x="68.07" y="87.20" width="1.2" height="9.8" fill="#c82010"/><rect x="75.05" y="87.20" width="1.2" height="9.8" fill="#c82010"/><rect x="82.04" y="87.20" width="1.2" height="9.8" fill="#c82010"/><rect x="89.02" y="87.20" width="1.2" height="9.8" fill="#c82010"/><rect x="96.01" y="87.20" width="1.2" height="9.8" fill="#c82010"/><rect x="103.00" y="87.20" width="1.2" height="9.8" fill="#c82010"/><rect x="109.98" y="87.20" width="1.2" height="9.8" fill="#c82010"/><path d="M484.83 87.00H489.53V98.60H484.83V97.10H488.03V88.50H484.83Z" fill="#ffffff"/><path d="M32.24 103.94H36.94V105.44H33.74V114.04H36.94V115.54H32.24Z" fill="#ffffff"/><path d="M401.00 103.94H405.70V115.54H401.00V114.04H404.20V105.44H401.00Z" fill="#ffffff"/><path d="M32.24 137.82H36.94V139.32H33.74V147.92H36.94V149.42H32.24Z" fill="#ffffff"/><path d="M910.98 137.82H915.68V149.42H910.98V147.92H914.18V139.32H910.98Z" fill="#ffffff"/><path d="M32.24 154.76H36.94V156.26H33.74V164.86H36.94V166.36H32.24Z" fill="#ffffff"/><path d="M966.87 154.76H971.57V166.36H966.87V164.86H970.07V156.26H966.87Z" fill="#ffffff"/><path d="M39.13 546.80H43.83V548.30H40.63V557.30H43.83V558.80H39.13Z" fill="#e6e6e6"/><path d="M463.58 546.80H468.48V558.80H463.58V557.30H466.98V548.30H463.58Z" fill="#e6e6e6"/><path d="M39.13 563.74H43.83V565.24H40.63V574.24H43.83V575.74H39.13Z" fill="#e6e6e6"/><path d="M463.58 563.74H468.48V575.74H463.58V574.24H466.98V565.24H463.58Z" fill="#e6e6e6"/><path d="M39.13 580.68H43.83V582.18H40.63V591.18H43.83V592.68H39.13Z" fill="#e6e6e6"/><path d="M463.58 580.68H468.48V592.68H463.58V591.18H466.98V582.18H463.58Z" fill="#e6e6e6"/><path d="M514.18 546.80H518.88V548.30H515.68V557.30H518.88V558.80H514.18Z" fill="#e6e6e6"/><path d="M938.62 546.80H943.52V558.80H938.62V557.30H942.02V548.30H938.62Z" fill="#e6e6e6"/><path d="M514.18 563.74H518.88V565.24H515.68V574.24H518.88V575.74H514.18Z" fill="#e6e6e6"/><path d="M938.62 563.74H943.52V575.74H938.62V574.24H942.02V565.24H938.62Z" fill="#e6e6e6"/><path d="M514.18 580.68H518.88V582.18H515.68V591.18H518.88V592.68H514.18Z" fill="#e6e6e6"/><path d="M938.62 580.68H943.52V592.68H938.62V591.18H942.02V582.18H938.62Z" fill="#e6e6e6"/><rect x="47.18" y="546.90" width="1.05" height="10.0" fill="#c8492f"/><rect x="47.18" y="563.84" width="1.05" height="10.0" fill="#3cb03c"/><rect x="54.17" y="563.84" width="1.05" height="10.0" fill="#c8492f"/><rect x="61.16" y="563.84" width="1.05" height="10.0" fill="#c8492f"/><rect x="47.18" y="580.78" width="1.05" height="10.0" fill="#c8492f"/><rect x="522.23" y="546.90" width="1.05" height="10.0" fill="#3cb03c"/><rect x="529.22" y="546.90" width="1.05" height="10.0" fill="#3cb03c"/><rect x="522.23" y="563.84" width="1.05" height="10.0" fill="#c8492f"/><rect x="529.22" y="563.84" width="1.05" height="10.0" fill="#c8492f"/><rect x="522.23" y="580.78" width="1.05" height="10.0" fill="#3cb03c"/><path d="M39.13 597.62H43.83V599.12H40.63V608.12H43.83V609.62H39.13Z" fill="#e6e6e6"/><rect x="47.18" y="597.72" width="1.05" height="10.0" fill="#3cb03c"/><rect x="54.17" y="597.72" width="1.05" height="10.0" fill="#3cb03c"/><rect x="61.16" y="597.72" width="1.05" height="10.0" fill="#3cb03c"/><rect x="68.14" y="597.72" width="1.05" height="10.0" fill="#3cb03c"/><rect x="75.13" y="597.72" width="1.05" height="10.0" fill="#3cb03c"/><rect x="82.11" y="597.72" width="1.05" height="10.0" fill="#3cb03c"/><rect x="89.10" y="597.72" width="1.05" height="10.0" fill="#3cb03c"/><rect x="96.09" y="597.72" width="1.05" height="10.0" fill="#3cb03c"/><rect x="103.07" y="597.72" width="1.05" height="10.0" fill="#3cb03c"/><rect x="110.06" y="597.72" width="1.05" height="10.0" fill="#3cb03c"/><rect x="117.04" y="597.72" width="1.05" height="10.0" fill="#3cb03c"/><rect x="124.03" y="597.72" width="1.05" height="10.0" fill="#3cb03c"/><rect x="131.02" y="597.72" width="1.05" height="10.0" fill="#3cb03c"/><rect x="138.00" y="597.72" width="1.05" height="10.0" fill="#3cb03c"/><rect x="144.99" y="597.72" width="1.05" height="10.0" fill="#3cb03c"/><rect x="151.97" y="597.72" width="1.05" height="10.0" fill="#3cb03c"/><rect x="158.96" y="597.72" width="1.05" height="10.0" fill="#3cb03c"/><rect x="165.95" y="597.72" width="1.05" height="10.0" fill="#3cb03c"/><rect x="172.93" y="597.72" width="1.05" height="10.0" fill="#3cb03c"/><rect x="179.92" y="597.72" width="1.05" height="10.0" fill="#3cb03c"/><rect x="186.90" y="597.72" width="1.05" height="10.0" fill="#3cb03c"/><rect x="193.89" y="597.72" width="1.05" height="10.0" fill="#3cb03c"/><rect x="200.88" y="597.72" width="1.05" height="10.0" fill="#3cb03c"/><rect x="207.86" y="597.72" width="1.05" height="10.0" fill="#3cb03c"/><rect x="214.85" y="597.72" width="1.05" height="10.0" fill="#3cb03c"/><rect x="221.83" y="597.72" width="1.05" height="10.0" fill="#3cb03c"/><rect x="228.82" y="597.72" width="1.05" height="10.0" fill="#3cb03c"/><rect x="235.81" y="597.72" width="1.05" height="10.0" fill="#3cb03c"/><rect x="242.79" y="597.72" width="1.05" height="10.0" fill="#3cb03c"/><rect x="249.78" y="597.72" width="1.05" height="10.0" fill="#3cb03c"/><rect x="256.76" y="597.72" width="1.05" height="10.0" fill="#3cb03c"/><rect x="263.75" y="597.72" width="1.05" height="10.0" fill="#3cb03c"/><rect x="270.74" y="597.72" width="1.05" height="10.0" fill="#3cb03c"/><rect x="277.72" y="597.72" width="1.05" height="10.0" fill="#3cb03c"/><rect x="284.71" y="597.72" width="1.05" height="10.0" fill="#3cb03c"/><rect x="291.69" y="597.72" width="1.05" height="10.0" fill="#3cb03c"/><rect x="298.68" y="597.72" width="1.05" height="10.0" fill="#3cb03c"/><rect x="305.67" y="597.72" width="1.05" height="10.0" fill="#3cb03c"/><rect x="312.65" y="597.72" width="1.05" height="10.0" fill="#3cb03c"/><rect x="319.64" y="597.72" width="1.05" height="10.0" fill="#3cb03c"/><rect x="326.62" y="597.72" width="1.05" height="10.0" fill="#3cb03c"/><rect x="333.61" y="597.72" width="1.05" height="10.0" fill="#3cb03c"/><rect x="340.60" y="597.72" width="1.05" height="10.0" fill="#3cb03c"/><rect x="347.58" y="597.72" width="1.05" height="10.0" fill="#3cb03c"/><rect x="354.57" y="597.72" width="1.05" height="10.0" fill="#3cb03c"/><rect x="361.55" y="597.72" width="1.05" height="10.0" fill="#3cb03c"/><rect x="368.54" y="597.72" width="1.05" height="10.0" fill="#3cb03c"/><rect x="375.53" y="597.72" width="1.05" height="10.0" fill="#3cb03c"/><rect x="382.51" y="597.72" width="1.05" height="10.0" fill="#3cb03c"/><path d="M463.58 597.62H468.48V609.62H463.58V608.12H466.98V599.12H463.58Z" fill="#e6e6e6"/><path d="M39.13 614.56H43.83V616.06H40.63V625.06H43.83V626.56H39.13Z" fill="#e6e6e6"/><rect x="47.18" y="614.66" width="1.05" height="10.0" fill="#c8492f"/><rect x="54.17" y="614.66" width="1.05" height="10.0" fill="#c8492f"/><rect x="61.16" y="614.66" width="1.05" height="10.0" fill="#c8492f"/><rect x="68.14" y="614.66" width="1.05" height="10.0" fill="#c8492f"/><rect x="75.13" y="614.66" width="1.05" height="10.0" fill="#c8492f"/><rect x="82.11" y="614.66" width="1.05" height="10.0" fill="#c8492f"/><rect x="89.10" y="614.66" width="1.05" height="10.0" fill="#c8492f"/><rect x="96.09" y="614.66" width="1.05" height="10.0" fill="#c8492f"/><rect x="103.07" y="614.66" width="1.05" height="10.0" fill="#c8492f"/><rect x="110.06" y="614.66" width="1.05" height="10.0" fill="#c8492f"/><rect x="117.04" y="614.66" width="1.05" height="10.0" fill="#c8492f"/><path d="M463.58 614.56H468.48V626.56H463.58V625.06H466.98V616.06H463.58Z" fill="#e6e6e6"/></svg>
</body></html>
